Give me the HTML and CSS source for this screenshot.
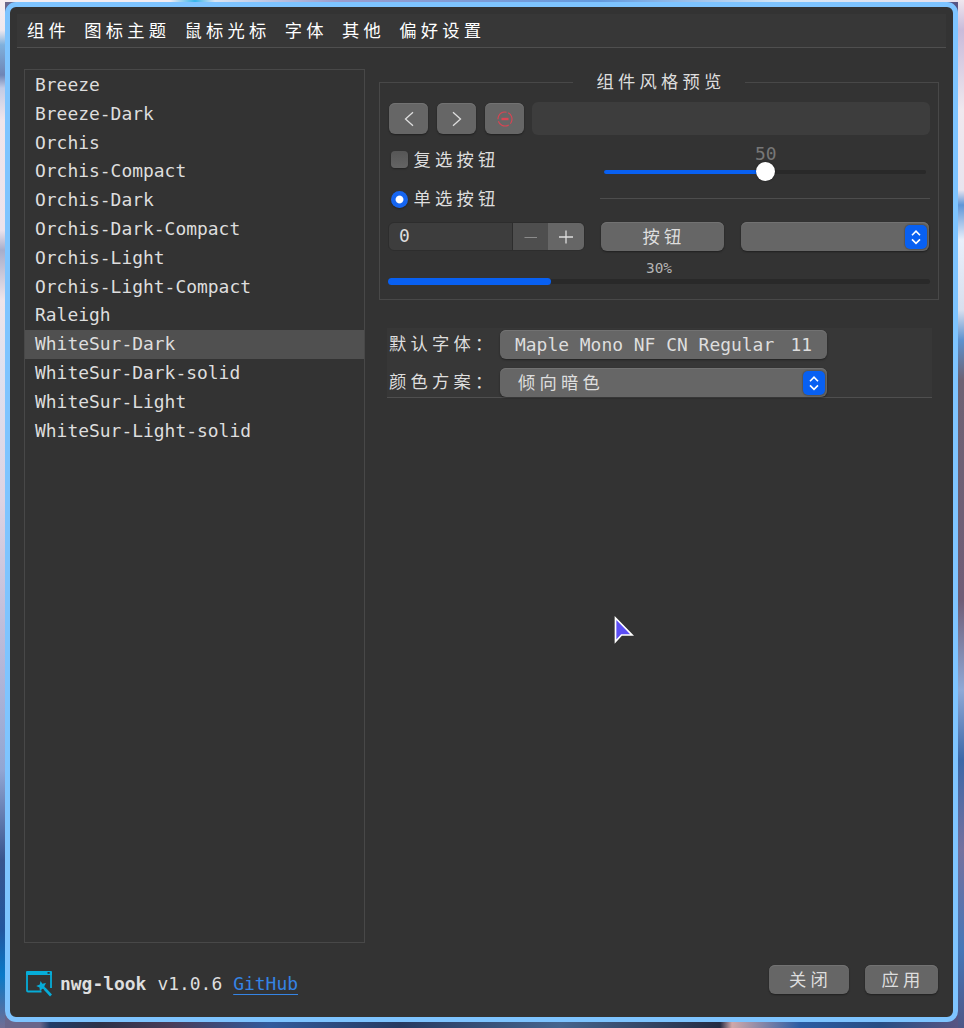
FILE: index.html
```
<!DOCTYPE html>
<html lang="zh-CN">

<head>
    <meta charset="UTF-8">
    <meta name="viewport" content="width=device-width, initial-scale=1.0">
    <title>nwg-look</title>
    <link rel="stylesheet" href="styles.css">
</head>

<body>

    <div class="window">
        <!-- Menu bar -->
        <nav class="menubar">
            <span class="cjk">组件</span>
            <span class="cjk">图标主题</span>
            <span class="cjk">鼠标光标</span>
            <span class="cjk">字体</span>
            <span class="cjk">其他</span>
            <span class="cjk">偏好设置</span>
        </nav>

        <div class="content">
            <!-- Theme list -->
            <ul class="theme-list">
                <li>Breeze</li>
                <li>Breeze-Dark</li>
                <li>Orchis</li>
                <li>Orchis-Compact</li>
                <li>Orchis-Dark</li>
                <li>Orchis-Dark-Compact</li>
                <li>Orchis-Light</li>
                <li>Orchis-Light-Compact</li>
                <li>Raleigh</li>
                <li class="selected">WhiteSur-Dark</li>
                <li>WhiteSur-Dark-solid</li>
                <li>WhiteSur-Light</li>
                <li>WhiteSur-Light-solid</li>
            </ul>

            <div class="side">
                <!-- Widget preview -->
                <fieldset class="preview">
                    <legend class="cjk">组件风格预览</legend>

                    <div class="row tools">
                        <button class="btn icon-btn">
                            <svg width="16" height="18" viewBox="0 0 16 18"><path d="M12 2.3 4.5 9l7.5 6.7" fill="none" stroke="#dedede" stroke-width="1.3"/></svg>
                        </button>
                        <button class="btn icon-btn">
                            <svg width="16" height="18" viewBox="0 0 16 18"><path d="M4 2.3 11.5 9 4 15.7" fill="none" stroke="#dedede" stroke-width="1.3"/></svg>
                        </button>
                        <button class="btn icon-btn">
                            <svg width="16" height="16" viewBox="0 0 16 16">
                                <circle cx="8" cy="8" r="7" fill="none" stroke="#da4453" stroke-width="1.1" stroke-dasharray="12.6 2.06" transform="rotate(-63 8 8)"/>
                                <path d="M4.5 8h7" stroke="#da4453" stroke-width="2.4"/>
                            </svg>
                        </button>
                        <div class="entry"></div>
                    </div>

                    <div class="row choices">
                        <div class="checks">
                            <div class="check"><i class="checkbox"></i><span class="cjk">复选按钮</span></div>
                            <div class="check"><i class="radio"></i><span class="cjk">单选按钮</span></div>
                        </div>
                        <div class="scale-box">
                            <div class="scale-value">50</div>
                            <div class="scale"><div class="scale-fill"></div><div class="knob"></div></div>
                            <div class="separator"></div>
                        </div>
                    </div>

                    <div class="row inputs">
                        <div class="spin">
                            <span class="spin-value">0</span>
                            <span class="spin-btn off"><svg width="16" height="16"><path d="M1.5 8.5h12.5" stroke="#8b8b8b" stroke-width="1.2"/></svg></span>
                            <span class="spin-btn"><svg width="16" height="16"><path d="M1 8h14M8 1.5v13" stroke="#dedede" stroke-width="1.3"/></svg></span>
                        </div>
                        <button class="btn sample-btn"><span class="cjk">按钮</span></button>
                        <div class="btn combo combo-sample">
                            <span></span>
                            <span class="arrows"><svg width="14" height="18"><path d="M3 7.2 7 3.2l4 4M3 11.4l4 4 4-4" fill="none" stroke="#fff" stroke-width="1.6"/></svg></span>
                        </div>
                    </div>

                    <div class="progress-text">30%</div>
                    <div class="progress"><div class="progress-fill"></div></div>
                </fieldset>

                <!-- Font and color scheme -->
                <div class="settings">
                    <label class="cjk">默认字体：</label>
                    <button class="btn font-btn"><span>Maple Mono NF CN Regular</span><span>11</span></button>
                    <label class="cjk">颜色方案：</label>
                    <div class="btn combo">
                        <span class="cjk">倾向暗色</span>
                        <span class="arrows"><svg width="14" height="18"><path d="M3 7.2 7 3.2l4 4M3 11.4l4 4 4-4" fill="none" stroke="#fff" stroke-width="1.6"/></svg></span>
                    </div>
                </div>
            </div>
        </div>

        <footer class="footer">
            <svg class="logo" width="28" height="28" viewBox="0 0 28 28">
                <path d="M16.5 22.5H3a1 1 0 0 1-1-1V4h24v15" fill="none" stroke="#06acd8" stroke-width="1.8"/>
                <path d="M2 2h24a1 1 0 0 1 1 1v3H1V3a1 1 0 0 1 1-1z" fill="#06acd8"/>
                <path d="M22.5 3h2.2v1.8h-2.2z" fill="#333"/>
                <path d="m15.5 12 1.9 2.7 3.6-.7-1.7 3.2 1.8 3.2-3.6-.7-2.6 2.3-.4-3.4-3.3-1.7 3.6-1.5z" fill="#06acd8"/>
                <path d="m19.5 19.5 6.5 7" stroke="#06acd8" stroke-width="2.6"/>
            </svg>
            <b>nwg-look</b>
            <span class="version">v1.0.6</span>
            <a href="#">GitHub</a>
            <button class="btn close-btn"><span class="cjk">关闭</span></button>
            <button class="btn apply-btn"><span class="cjk">应用</span></button>
        </footer>
    </div>

    <!-- Mouse pointer -->
    <svg class="pointer" width="22" height="30" viewBox="0 0 22 30"><path d="M2.5 3v23.5l6-6.5h10.5z" fill="#5b4df5" stroke="#fff" stroke-width="1.7"/></svg>

</body>

</html>
```
FILE: styles.css
```
* {
    box-sizing: border-box;
}

/* Desktop wallpaper behind the window */
body {
    margin: 0;
    height: 1028px;
    padding: 2px 6px 6px 5px;
    overflow: hidden;
    color: #dedede;
    font: 17.94px "DejaVu Sans Mono", "Noto Sans CJK SC", monospace;
    background:
        linear-gradient(#efe7ee 0, #c9bbda 30px, #efe8ee 110px, #e8e4ee 190px, #5f96d8 205px, #e8effa 240px, #d8dfee 310px, #5d92cf 340px, #6d6273 380px, #6f5d76 600px, #8fa9d6 690px, #3c68a8 760px, #75719e 850px, #4577b8 950px, #4e5686 1028px) right / 6px 100% no-repeat,
        linear-gradient(#f5eef2 0, #efe8ee 30px, #7fb0dc 45px, #6f85b5 75px, #c1cbe5 88px, #f0e5ea 120px, #ece3ec 230px, #a6adca 250px, #eee4e9 300px, #dfe1ef 370px, #ddd3e2 500px, #b9b9d8 650px, #91a6d3 770px, #38558e 860px, #22569f 930px, #0879c8 975px, #716d94 1028px) left / 5px 100% no-repeat,
        linear-gradient(90deg, #f3ecf1 0, #f3ecf1 170px, #38b6ec 195px, #dbe5f2 215px, #9b9ccc 340px, #639ade 600px, #d6e6f5 780px, #e9e0eb 964px) top / 100% 2px no-repeat,
        linear-gradient(90deg, #69668b 0, #69668b 40px, #203c68 50px, #2d3148 100px, #483b58 170px, #315a9c 270px, #263a61 400px, #45648d 560px, #242b43 720px, #d0a8aa 732px, #2b5ca3 800px, #274d84 880px, #5b5583 964px);
}

.cjk {
    font-size: 17.3px;
    letter-spacing: 4.2px;
    font-family: "Noto Sans CJK SC", sans-serif;
}

.window {
    display: flex;
    flex-direction: column;
    height: 1020px;
    padding: 7px 7px 0;
    border: 5px solid #7ec4ff;
    border-radius: 11px;
    background: #333;
}

/* Menu bar */
.menubar {
    display: flex;
    align-items: center;
    gap: 14.3px;
    height: 34px;
    padding: 0 0 2px 10px;
    background: #373737;
    border-bottom: 1px solid #4f4f4f;
    color: #fff;
}

.content {
    display: flex;
    gap: 14px;
    height: 874px;
    margin: 21px 7px 0;
}

/* Theme list */
.theme-list {
    width: 341px;
    margin: 0;
    padding: 1px 0 0;
    list-style: none;
    border: 1px solid #484848;
}

.theme-list li {
    height: 28.8px;
    padding-left: 10px;
    line-height: 28px;
}

.theme-list .selected {
    background: #505050;
}

/* Widget preview */
.side {
    width: 560px;
}

.preview {
    height: 230px;
    margin: 1px 0 0;
    padding: 8px 8px 0;
    border: 1px solid #484848;
}

.preview legend {
    height: 24px;
    margin: 0 auto;
    padding: 0 20px 0 24px;
    line-height: 21px;
}

.row {
    display: flex;
}

.tools {
    padding-left: 1px;
}

.btn {
    display: flex;
    align-items: center;
    justify-content: center;
    padding: 0;
    border: none;
    border-radius: 6px;
    background: #666;
    color: #dedede;
    font: inherit;
    line-height: 27px;
    box-shadow: inset 0 1px #727272, 0 1px 2px rgba(0, 0, 0, 0.4);
}

.btn > .cjk {
    margin-top: -2px;
    padding-left: 3px;
}

.icon-btn {
    width: 39px;
    height: 31px;
    margin: 1px 9px 0 0;
}

.entry {
    flex: 1;
    height: 33px;
    margin-left: -1px;
    border-radius: 6px;
    background: #3d3d3d;
}

.check {
    display: flex;
    align-items: center;
    gap: 5.5px;
    height: 39.5px;
    padding: 0 0 2px 3px;
}

.check .cjk {
    margin-top: -3px;
}

.checks {
    width: 212px;
    padding-top: 6px;
}

.checkbox,
.radio {
    width: 17px;
    height: 17px;
    border-radius: 4px;
    background: linear-gradient(#565656, #646464);
    box-shadow: 0 1px 2px rgba(0, 0, 0, 0.35);
}

.radio {
    border-radius: 50%;
    background: radial-gradient(circle, #fff 3.4px, #1565f0 4.4px);
}

.scale-box {
    flex: 1;
    padding-top: 9px;
}

.scale-value {
    padding-left: 155px;
    line-height: 20px;
    color: #777;
}

.scale {
    position: relative;
    height: 4px;
    margin: 6px 4px 0;
    border-radius: 2px;
    background: #292929;
}

.scale-fill {
    width: 50%;
    height: 4px;
    border-radius: 2px;
    background: #0860f2;
}

.knob {
    position: absolute;
    top: -8px;
    left: calc(50% - 9px);
    width: 19px;
    height: 19px;
    border-radius: 50%;
    background: #fff;
    box-shadow: 0 0 2px rgba(0, 0, 0, 0.5);
}

.separator {
    height: 1px;
    margin-top: 24px;
    background: #4d4d4d;
}

.inputs {
    height: 29px;
    margin-top: 2px;
}

.spin {
    display: flex;
    width: 197px;
    margin: 0 16px 0 0;
    overflow: hidden;
    border: 1px solid #2d2d2d;
    border-radius: 6px;
    background: #3d3d3d;
}

.spin-value {
    flex: 1;
    padding-left: 10px;
    line-height: 26px;
}

.spin-btn {
    display: flex;
    align-items: center;
    justify-content: center;
    width: 36px;
    background: #666;
}

.spin-btn.off {
    border-left: 1px solid #2d2d2d;
    background: #4e4e4e;
}

.sample-btn {
    width: 123px;
    margin-right: 17px;
}

.combo {
    justify-content: space-between;
    padding: 0 2px 0 15px;
}

.combo-sample {
    flex: 1;
    margin-right: 1px;
}

.arrows {
    display: flex;
    align-items: center;
    justify-content: center;
    width: 22px;
    height: 24px;
    border-radius: 5px;
    background: #0860f2;
    box-shadow: 0 0 1px 1px #555;
}

.progress-text {
    margin-top: 9px;
    text-align: center;
    font-size: 14.4px;
    line-height: 17px;
    color: #b5b5b5;
}

.progress {
    height: 5px;
    margin-top: 2px;
    border-radius: 3px;
    background: #292929;
}

.progress-fill {
    position: relative;
    top: -1px;
    width: 30%;
    height: 7px;
    border-radius: 3.5px;
    background: #0860f2;
}

/* Font and color scheme */
.settings {
    display: grid;
    grid-template-columns: 111px 327px;
    grid-template-rows: 28.5px 29px;
    row-gap: 9.5px;
    width: 545px;
    height: 70px;
    margin: 28px 0 0 8px;
    padding: 2px 0 0 2px;
    background: #373737;
    border-bottom: 1px solid #4f4f4f;
}

.settings label {
    line-height: 25px;
}

.font-btn {
    justify-content: space-between;
    padding: 0 15px;
}

/* Footer */
.footer {
    display: flex;
    align-items: center;
    height: 36px;
    margin: 22px 8px 0;
}

.logo {
    margin-right: 7px;
}

.version {
    margin: 0 11px;
}

.footer a {
    color: #3584e4;
    text-underline-offset: 4px;
    text-decoration-thickness: 1px;
}

.close-btn,
.apply-btn {
    width: 80px;
    height: 29px;
    margin: 0 16px 7px auto;
}

.apply-btn {
    width: 73px;
    margin: 0 0 7px;
}

.pointer {
    position: absolute;
    top: 615px;
    left: 613px;
}
```
